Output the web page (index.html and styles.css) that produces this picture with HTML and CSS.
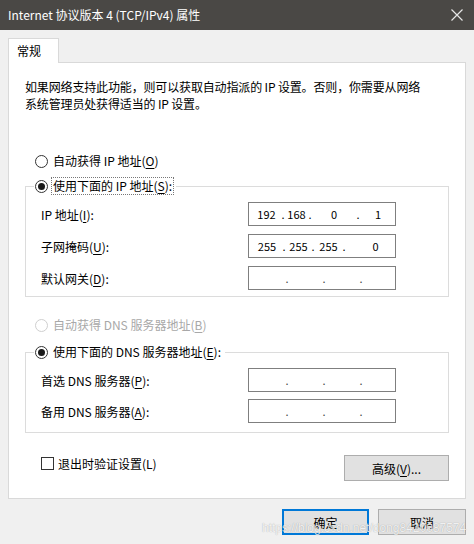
FILE: index.html
```html
<!DOCTYPE html>
<html lang="zh-CN">
<head>
<meta charset="utf-8">
<title>Internet 协议版本 4 (TCP/IPv4) 属性</title>
<link rel="stylesheet" href="styles.css">
</head>
<body>
<div class="titlebar">
  <span class="title">Internet 协议版本 4 (TCP/IPv4) 属性</span>
  <svg class="close" viewBox="0 0 12 12" width="12" height="12"><path d="M0.5 0.5 L11.5 11.5 M11.5 0.5 L0.5 11.5" stroke="#e6e6e6" stroke-width="1.2" fill="none"/></svg>
</div>
<div class="content">
  <div class="tabs"><div class="tab">常规</div></div>
  <div class="panel">
    <p class="intro">如果网络支持此功能，则可以获取自动指派的 IP 设置。否则，你需要从网络<br>系统管理员处获得适当的 IP 设置。</p>

    <div class="radio-row solo first"><span class="radio"></span><span class="lbl">自动获得 IP 地址(<u>O</u>)</span></div>
    <fieldset class="group g1">
      <legend><div class="radio-row"><span class="radio checked"></span><span class="lbl focus">使用下面的 IP 地址(<u>S</u>):</span></div></legend>
      <div class="rows">
        <div class="field-row"><span class="flabel">IP 地址(<u>I</u>):</span>
          <div class="ip ip-a"><span class="n">192</span><span class="d">.</span><span class="n">168</span><span class="d">.</span><span class="n">0</span><span class="d">.</span><span class="n">1</span></div></div>
        <div class="field-row"><span class="flabel">子网掩码(<u>U</u>):</span>
          <div class="ip ip-b"><span class="n">255</span><span class="d">.</span><span class="n">255</span><span class="d">.</span><span class="n">255</span><span class="d">.</span><span class="n">0</span></div></div>
        <div class="field-row"><span class="flabel">默认网关(<u>D</u>):</span>
          <div class="ip ip-e"><span class="n"></span><span class="d">.</span><span class="n"></span><span class="d">.</span><span class="n"></span><span class="d">.</span><span class="n"></span></div></div>
      </div>
    </fieldset>

    <div class="radio-row solo disabled"><span class="radio"></span><span class="lbl">自动获得 DNS 服务器地址(<u>B</u>)</span></div>
    <fieldset class="group g2">
      <legend><div class="radio-row"><span class="radio checked"></span><span class="lbl">使用下面的 DNS 服务器地址(<u>E</u>):</span></div></legend>
      <div class="rows dns">
        <div class="field-row"><span class="flabel">首选 DNS 服务器(<u>P</u>):</span>
          <div class="ip ip-e"><span class="n"></span><span class="d">.</span><span class="n"></span><span class="d">.</span><span class="n"></span><span class="d">.</span><span class="n"></span></div></div>
        <div class="field-row"><span class="flabel">备用 DNS 服务器(<u>A</u>):</span>
          <div class="ip ip-e"><span class="n"></span><span class="d">.</span><span class="n"></span><span class="d">.</span><span class="n"></span><span class="d">.</span><span class="n"></span></div></div>
      </div>
    </fieldset>

    <div class="options">
      <label class="check"><span class="box"></span><span>退出时验证设置(L)</span></label>
      <button class="btn adv">高级(<u>V</u>)...</button>
    </div>
  </div>
  <div class="footer">
    <button class="btn ok">确定</button>
    <button class="btn cancel">取消</button>
  </div>
</div>
<div class="watermark">https://blog.csdn.net/dong8420087574</div>
</body>
</html>
```
FILE: styles.css
```css
* { box-sizing: border-box; }
html, body { margin: 0; padding: 0; }
body {
  width: 474px;
  height: 544px;
  overflow: hidden;
  position: relative;
  background: #f0f0f0;
  color: #000;
  font-family: "Noto Sans CJK SC", "Noto Sans", sans-serif;
  font-size: 12px;
}
u { text-decoration: underline; text-underline-offset: 2px; }

.titlebar {
  height: 30px;
  background: #4a4845;
  color: #fff;
  display: flex;
  align-items: center;
  justify-content: space-between;
  padding: 0 11px 0 8px;
}
.title { font-size: 12px; line-height: 16px; }
.close { display: block; }

.content { padding: 8px 8px 0 8px; }

.tabs { display: flex; }
.tab {
  position: relative;
  z-index: 1;
  height: 25px;
  margin-bottom: -1px;
  padding: 0 17px 0 8px;
  background: #fff;
  border: 1px solid #d9d9d9;
  border-bottom: none;
  line-height: 23px;
}

.panel {
  background: #fff;
  border: 1px solid #d9d9d9;
  padding: 15px 16px 17px 16px;
}
.intro {
  margin: 0;
  line-height: 17px;
  white-space: nowrap;
  letter-spacing: -0.15px;
}

.radio-row {
  display: flex;
  align-items: center;
  height: 18px;
  white-space: nowrap;
}
.radio-row.solo { padding-left: 10px; }
.radio-row.first { margin-top: 40px; }
.radio {
  width: 13px;
  height: 13px;
  border-radius: 50%;
  border: 1px solid #333;
  background: #fff;
  flex-shrink: 0;
  display: flex;
  align-items: center;
  justify-content: center;
}
.radio.checked::after {
  content: "";
  width: 7px;
  height: 7px;
  border-radius: 50%;
  background: #1a1a1a;
}
.lbl {
  margin-left: 3px;
  padding: 0 1px;
  border: 1px dotted transparent;
  line-height: 16px;
}
.lbl.focus { border-color: #777; }
.disabled { color: #a8a8a8; margin-top: 19px; }
.disabled .radio { border-color: #cfcfcf; }

.group {
  margin: 7px 0 0 0;
  padding: 7px 8px 6px 8px;
  border: 1px solid #dcdcdc;
  min-width: 0;
}
.group legend { padding: 0 2px 0 1px; }
.g2 { margin-top: 9px; padding-bottom: 9px; }

.rows { display: flex; flex-direction: column; gap: 8px; }
.rows.dns { gap: 7px; }
.field-row {
  display: flex;
  align-items: center;
  height: 24px;
  padding-left: 7px;
}
.flabel { width: 207px; white-space: nowrap; }

.ip {
  width: 148px;
  height: 24px;
  border: 1px solid #7f7f7f;
  display: grid;
  align-items: center;
  font-size: 11px;
  line-height: 22px;
}
.ip .n, .ip .d { text-align: center; }
.ip-a { padding-left: 4px; grid-template-columns: 27px 6px 21px 6px 42px 6px 34px; }
.ip-b { padding-left: 4px; grid-template-columns: 28px 6px 23px 6px 25px 6px 1fr; }
.ip-b .n:last-child { padding-left: 9px; }
.ip-e { grid-template-columns: 35px 6px 31px 6px 31px 6px 1fr; }
.ip-e .d { color: #444; }

.options {
  display: flex;
  justify-content: space-between;
  align-items: flex-start;
  margin-top: 22px;
  padding-left: 16px;
}
.check {
  display: flex;
  align-items: center;
  height: 18px;
  gap: 4px;
  margin-top: -1px;
}
.box {
  width: 13px;
  height: 13px;
  border: 1px solid #333;
  background: #fff;
}

.btn {
  font-family: inherit;
  font-size: 12px;
  color: #000;
  background: #e1e1e1;
  border: 1px solid #adadad;
  height: 26px;
  padding: 0;
  margin: 0;
}
.adv { width: 105px; }

.footer {
  display: flex;
  justify-content: flex-end;
  gap: 9px;
  margin-top: 10px;
}
.ok { width: 87px; border-color: #0078d7; box-shadow: inset 0 0 0 1px #0078d7; }
.cancel { width: 88px; }

.watermark {
  position: absolute;
  left: 262px;
  top: 521px;
  font-family: "Liberation Sans", sans-serif;
  font-size: 12px;
  color: rgba(255, 255, 255, 0.85);
  text-shadow: 0 0 1px rgba(0, 0, 0, 0.35);
  white-space: nowrap;
}
```
